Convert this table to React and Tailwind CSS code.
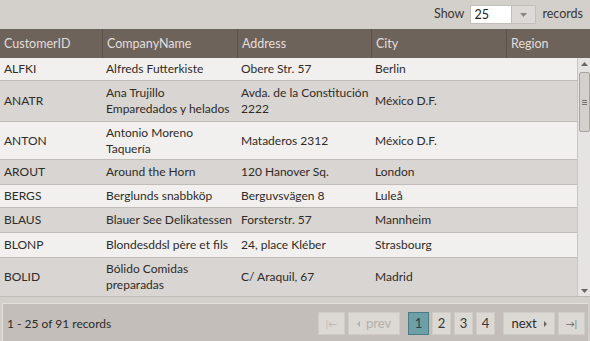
import React from 'react'

const rows = [
  { id: 'ALFKI', company: ['Alfreds Futterkiste'], address: ['Obere Str. 57'], city: 'Berlin', h: 'h-[23px]', bg: 'bg-[#f1f0ee]' },
  { id: 'ANATR', company: ['Ana Trujillo', 'Emparedados y helados'], address: ['Avda. de la Constitución', '2222'], city: 'México D.F.', h: 'h-[41px]', bg: 'bg-[#d8d5d2]' },
  { id: 'ANTON', company: ['Antonio Moreno', 'Taquería'], address: ['Mataderos 2312'], city: 'México D.F.', h: 'h-[38px]', bg: 'bg-[#f1f0ee]' },
  { id: 'AROUT', company: ['Around the Horn'], address: ['120 Hanover Sq.'], city: 'London', h: 'h-[25px]', bg: 'bg-[#d8d5d2]' },
  { id: 'BERGS', company: ['Berglunds snabbköp'], address: ['Berguvsvägen 8'], city: 'Luleå', h: 'h-[23px]', bg: 'bg-[#f1f0ee]' },
  { id: 'BLAUS', company: ['Blauer See Delikatessen'], address: ['Forsterstr. 57'], city: 'Mannheim', h: 'h-[25px]', bg: 'bg-[#d8d5d2]' },
  { id: 'BLONP', company: ['Blondesddsl père et fils'], address: ['24, place Kléber'], city: 'Strasbourg', h: 'h-[25px]', bg: 'bg-[#f1f0ee]' },
  { id: 'BOLID', company: ['Bólido Comidas', 'preparadas'], address: ['C/ Araquil, 67'], city: 'Madrid', h: 'h-[39px]', bg: 'bg-[#d8d5d2]' },
]

const cols = 'grid grid-cols-[102px_135px_134px_135px_1fr]'

const Lines = ({ lines }) => (
  <div className="flex flex-col leading-[16px]">
    {lines.map((l) => (
      <span key={l} className="whitespace-nowrap">{l}</span>
    ))}
  </div>
)

export default function App() {
  return (
    <div className="w-[590px] h-[341px] overflow-hidden bg-[#d3cfcb] text-[12px] text-[#2f2b28] font-['Lato','Liberation_Sans',sans-serif]">
      {/* toolbar */}
      <div className="h-[29px] flex items-center justify-end pr-[7px] gap-[6px] text-[#3a3633] text-[12.5px]">
        <span>Show</span>
        <div className="flex h-[19px] border border-[#c2beba]">
          <div className="w-[40px] bg-white pl-[3px] leading-[17px] text-[#222]">25</div>
          <div className="w-[24px] bg-[#dcd9d6] border-l border-[#c2beba] flex items-center justify-center">
            <svg width="7" height="4" viewBox="0 0 7 4"><path d="M0 0h7L3.5 4z" fill="#8a8682" /></svg>
          </div>
        </div>
        <span>records</span>
      </div>

      {/* header */}
      <div className={`${cols} h-[29px] bg-[#6d635b] text-[#e2deda] text-[12.5px]`}>
        {['CustomerID', 'CompanyName', 'Address', 'City', 'Region'].map((h, i) => (
          <div key={h} className={`flex items-center pl-[4px] pt-[1px] ${i > 0 ? 'border-l border-[#5b524b]' : ''}`}>
            {h}
          </div>
        ))}
      </div>

      {/* body */}
      <div className="flex h-[239px] border-b border-[#bab6b2]">
        <div className="flex-1">
          {rows.map((r) => (
            <div key={r.id} className={`${cols} ${r.h} ${r.bg} border-b border-[#c0bcb8] items-center`}>
              <div className="pl-[4px]">{r.id}</div>
              <div className="pl-[4px]"><Lines lines={r.company} /></div>
              <div className="pl-[4px]"><Lines lines={r.address} /></div>
              <div className="pl-[4px]">{r.city}</div>
              <div />
            </div>
          ))}
        </div>
        {/* scrollbar */}
        <div className="w-[13px] bg-[#e6e4e2] border-l border-[#c9c5c1] flex flex-col items-center">
          <svg className="mt-[4px]" width="7" height="4" viewBox="0 0 7 4"><path d="M0 4h7L3.5 0z" fill="#6a6662" /></svg>
          <div className="mt-[6px] w-[11px] h-[60px] bg-[#d3d0cd] border border-[#a8a4a0] rounded-[2px] flex flex-col items-center justify-center gap-[1px]">
            <div className="w-[5px] h-px bg-[#77736f]" />
            <div className="w-[5px] h-px bg-[#77736f]" />
            <div className="w-[5px] h-px bg-[#77736f]" />
          </div>
          <div className="flex-1" />
          <svg className="mb-[3px]" width="7" height="4" viewBox="0 0 7 4"><path d="M0 0h7L3.5 4z" fill="#6a6662" /></svg>
        </div>
      </div>

      {/* footer */}
      <div className="mx-[2px] mt-[6px] h-[40px] bg-[#c3beb9] border-t border-l border-[#e3e0dd] flex items-center pl-[4px] pr-[3px]">
        <span className="text-[#2f2b28]">1 - 25 of 91 records</span>
        <div className="ml-auto flex items-center h-[23px] gap-[3px]">
          <div className="w-[27px] h-full bg-[#dcd9d5] border border-[#cfcbc7] flex items-center justify-center text-[#b9b5b1] text-[9px]">|←</div>
          <div className="w-[52px] h-full bg-[#dcd9d5] border border-[#cfcbc7] flex items-center justify-center gap-[6px] text-[#b3afab] text-[13px] mr-[5px]">
            <svg width="3" height="6" viewBox="0 0 3 6"><path d="M3 0v6L0 3z" fill="#b3afab" /></svg>
            <span>prev</span>
          </div>
          <div className="w-[21px] h-full bg-[#6e9ea6] border border-[#4b7c84] flex items-center justify-center text-[#24464c] text-[13px]">1</div>
          <div className="w-[19px] h-full bg-[#dcd9d5] border border-[#cfcbc7] flex items-center justify-center text-[#3a3633] text-[13px]">2</div>
          <div className="w-[19px] h-full bg-[#dcd9d5] border border-[#cfcbc7] flex items-center justify-center text-[#3a3633] text-[13px]">3</div>
          <div className="w-[19px] h-full bg-[#dcd9d5] border border-[#cfcbc7] flex items-center justify-center text-[#3a3633] text-[13px] mr-[5px]">4</div>
          <div className="w-[52px] h-full bg-[#dcd9d5] border border-[#cfcbc7] flex items-center justify-center gap-[7px] text-[#2f2b28] text-[13px]">
            <span>next</span>
            <svg width="3" height="6" viewBox="0 0 3 6"><path d="M0 0v6L3 3z" fill="#6a6662" /></svg>
          </div>
          <div className="w-[27px] h-full bg-[#dcd9d5] border border-[#cfcbc7] flex items-center justify-center text-[#6a6662] text-[9px]">→|</div>
        </div>
      </div>
    </div>
  )
}
